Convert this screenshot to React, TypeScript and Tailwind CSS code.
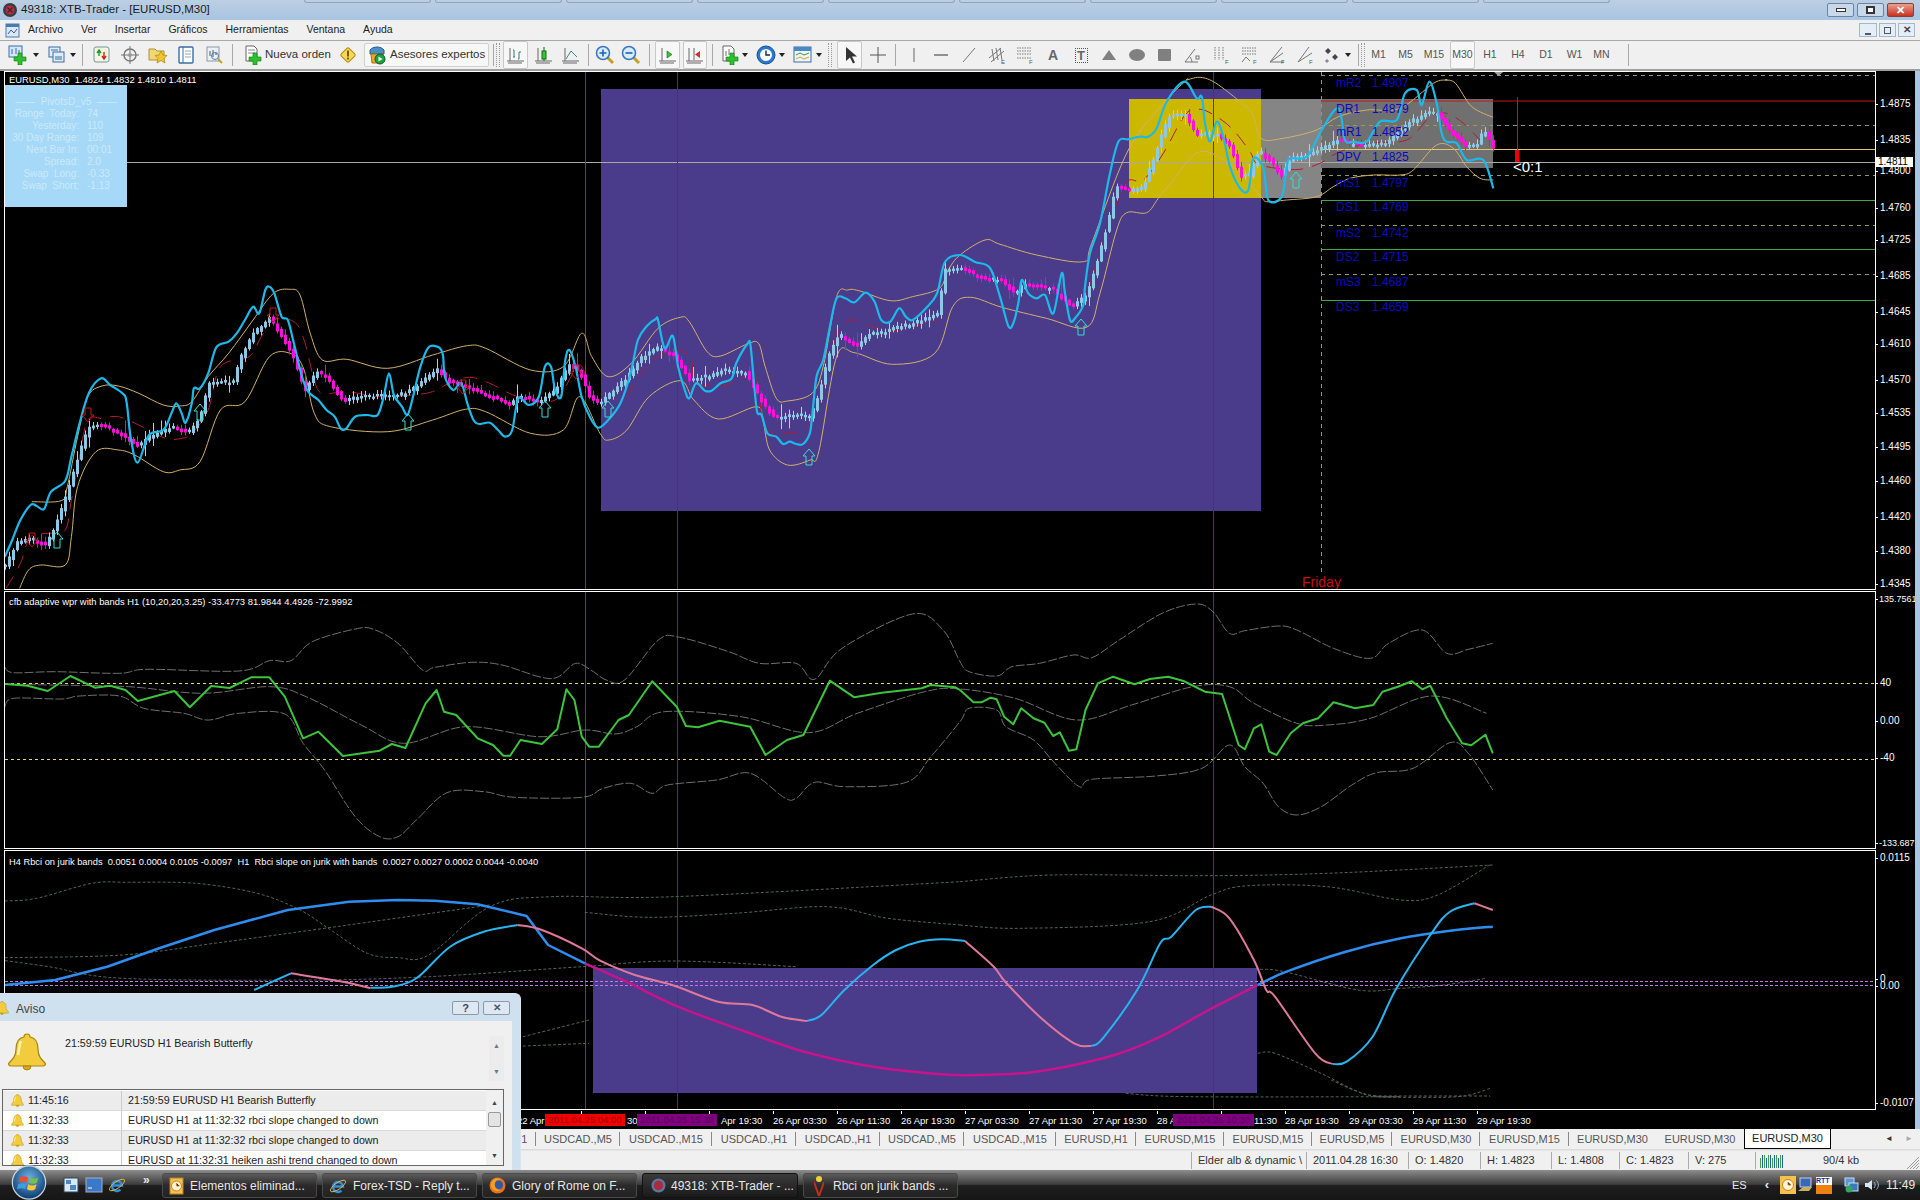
import React from "react";

type P = number[][];
const z7 = (p: P) => p.map(([x, y]) => [x / 2.45, 270 + y / 3]);
const z8 = (p: P) => p.map(([x, y]) => [600 + x / 2.24, 270 + y / 3]);
const z12 = (p: P) => p.map(([x, y]) => [1000 + x / 3, 80 + y / 3]);
const z3 = (p: P) => p.map(([x, y]) => [1280 + x / 2.45, y / 3]);
const z2 = (p: P) => p.map(([x, y]) => [640 + x / 2.45, y / 3]);
const z9 = (p: P) => p.map(([x, y]) => [x / 1.633, 590 + y / 3]);
const z10 = (p: P) => p.map(([x, y]) => [960 + x / 1.633, 590 + y / 3]);
const z11 = (p: P) => p.map(([x, y]) => [500 + x / 1.742, 940 + y / 3]);
const z6 = (p: P) => p.map(([x, y]) => [1280 + x / 2.45, 1080 + y / 3]);
const pts = (p: P) => p.map(([x, y]) => `${x.toFixed(1)},${y.toFixed(1)}`).join(" ");
const smooth = (p: P) => {
  let d = `M${p[0][0].toFixed(1)} ${p[0][1].toFixed(1)}`;
  for (let i = 0; i < p.length - 1; i++) {
    const a = p[Math.max(i - 1, 0)], b = p[i], c = p[i + 1], e = p[Math.min(i + 2, p.length - 1)];
    d += `C${(b[0] + (c[0] - a[0]) / 6).toFixed(1)} ${(b[1] + (c[1] - a[1]) / 6).toFixed(1)} ${(c[0] - (e[0] - b[0]) / 6).toFixed(1)} ${(c[1] - (e[1] - b[1]) / 6).toFixed(1)} ${c[0].toFixed(1)} ${c[1].toFixed(1)}`;
  }
  return d;
};

const cyan: P = [
  ...z7([[12,860],[30,810],[50,750],[75,705],[90,708],[108,717],[125,665],[160,632],[175,560],[195,460],[218,368],[248,325],[270,345],[300,370],[310,395],[320,500],[337,578],[365,495],[400,480],[420,430],[432,400],[445,430],[455,458],[470,400],[475,355],[490,355],[510,310],[530,232],[560,215],[580,190],[600,150],[620,110],[635,130],[650,60],[660,50],[672,70],[690,140],[705,150],[720,220],[740,320],[755,365],[780,390],[800,420],[820,440],[835,476],[848,476],[870,440],[900,435],[925,435],[940,380],[953,310],[965,375],[985,410],[998,435],[1010,390],[1030,290],[1050,232],[1075,232],[1085,255],[1090,320],[1110,360],[1130,340],[1145,400],[1160,450],[1175,462],[1200,458],[1220,480],[1238,500],[1255,480],[1270,385],[1295,405],[1320,380],[1335,290],[1350,290],[1360,360],[1375,380],[1385,270],[1395,240],[1410,290],[1425,380],[1445,440],[1465,473],[1490,450],[1520,400],[1545,310]]),
  ...z8([[85,210],[105,168],[125,147],[130,150],[145,235],[163,198],[175,290],[190,360],[200,385],[215,340],[235,362],[250,362],[270,340],[295,325],[305,280],[330,222],[337,225],[345,340],[352,425],[362,435],[375,490],[395,500],[410,522],[425,515],[440,522],[455,522],[470,490],[475,440],[485,320],[500,270],[515,170],[530,85],[550,85],[570,97],[595,68],[615,95],[630,150],[650,155],[670,115],[685,140],[700,150],[730,115],[755,70]]),
  [945,262],[960,255],[975,262],[990,268],
  ...z12([[0,650],[25,738],[40,730],[55,670],[65,600],[85,640],[110,655],[135,645],[160,700],[185,580],[195,640],[210,720],[225,715],[250,675],[255,620],[270,520],[300,430],[330,280],[355,185],[385,178],[420,170],[445,170],[470,145],[500,65],[553,5],[590,55],[605,50],[615,130],[630,185],[650,125],[670,170],[690,260],[720,325],[745,330],[760,235],[790,265],[805,360],[845,350],[860,260],[870,235],[920,230],[965,150],[1015,85],[1035,180],[1060,185],[1100,185],[1140,125],[1190,120],[1215,40],[1250,30],[1265,75],[1288,5],[1310,70],[1325,160],[1340,185],[1370,190],[1400,240],[1450,240],[1480,325]]),
];
const upper: P = [
  ...z7([[78,695],[150,692],[165,650],[190,500],[215,380],[250,348],[290,348],[340,370],[400,405],[440,408],[470,395],[510,320],[560,250],[620,150],[670,70],[710,58],[735,75],[760,190],[790,270],[850,268],[950,295],[1060,255],[1145,227],[1190,235],[1300,300],[1380,290],[1425,190],[1450,260],[1490,320]]),
  ...z8([[70,280],[130,175],[180,142],[200,155],[240,245],[270,258],[330,222],[355,220],[370,290],[395,385],[420,393],[475,370],[500,290],[530,80],[555,60],[580,62],[650,92],[700,80],[760,55],[780,0]]),
  [960,255],[985,240],
  ...z12([[0,493],[110,525],[250,545],[275,490],[385,210],[500,60],[560,0]]),
  ...z2([[1340,240],[1370,232],[1405,245],[1460,295],[1500,340]]),
  ...z12([[783,175],[850,175],[950,150],[1015,110],[1100,90],[1200,85],[1300,10],[1340,0]]),
  ...z3([[405,240],[430,250],[470,320],[522,352]]),
];
const lower: P = [
  ...z7([[48,955],[70,900],[100,885],[160,885],[175,800],[190,650],[235,545],[290,540],[330,555],[400,605],[440,600],[490,575],[540,420],[600,395],[660,260],[715,252],[745,300],[770,430],[810,470],[950,485],[1060,450],[1140,418],[1190,425],[1300,490],[1380,480],[1420,380],[1470,490]]),
  ...z8([[20,510],[60,480],[110,380],[180,332],[210,390],[265,447],[350,410],[365,450],[380,540],[420,585],[470,570],[490,545],[530,260],[570,248],[655,283],[750,250],[790,110],[830,82],[900,112],[1000,145],[1090,172]]),
  ...z12([[300,640],[350,450],[380,398],[440,398],[475,355],[520,300],[600,215],[700,260],[783,350],[800,365],[860,360],[950,350],[1000,320],[1050,295],[1120,285],[1200,285],[1240,270],[1310,195],[1360,205],[1400,260],[1440,295],[1480,300]]),
];
const redDash: P[] = [
  z7([[15,955],[50,880],[75,800],[120,790],[160,780],[175,690],[195,560],[215,450],[250,445],[290,440],[340,465],[405,505],[445,505],[470,490],[510,420],[540,290],[610,260],[640,200],[670,150],[720,155],[745,210],[770,330],[790,370],[850,365],[930,380],[1010,375],[1060,365],[1100,340],[1150,322],[1200,340],[1270,380],[1360,390],[1420,285],[1445,390]]),
  z8([[60,380],[110,280],[170,240],[205,270],[215,340],[300,340],[345,310],[370,470],[420,490],[470,460],[510,310],[530,195],[560,150],[600,165],[650,185],[700,170],[755,150]]),
  z12([[260,640],[340,400],[380,305],[430,300],[490,220],[555,105],[600,88],[650,110],[700,150],[750,215],[770,250],[830,265],[900,268],[960,250],[1010,220],[1100,190],[1220,180],[1290,110],[1340,100],[1390,130],[1440,180]]),
];
const candlePath: P = [
  ...z7([[12,890],[40,820],[75,805],[110,825],[130,780],[150,720],[175,620],[195,545],[215,470],[235,465],[265,475],[300,495],[340,530],[365,500],[420,470],[460,490],[490,440],[510,340],[540,335],[570,340],[590,260],[620,190],[660,145],[690,200],[720,270],[745,360],[775,310],[800,320],[840,395],[880,380],[930,378],[975,378],[1010,360],[1070,300],[1100,335],[1150,355],[1200,380],[1250,405],[1270,378],[1320,395],[1360,360],[1395,280],[1420,310],[1445,385],[1470,400],[1530,330]]),
  ...z8([[90,265],[130,235],[165,255],[200,330],[240,320],[275,300],[325,310],[365,400],[390,445],[430,435],[470,440],[490,370],[515,240],[535,195],[575,225],[600,195],[640,185],[690,165],[755,135]]),
  [945,270],[960,268],[975,275],[990,280],
  ...z12([[0,600],[45,645],[70,610],[130,625],[160,630],[215,680],[240,660],[260,640],[295,530],[330,400],[345,320],[385,335],[430,320],[465,220],[505,110],[555,105],[585,160],[625,165],[650,165],[690,200],[720,290],[745,290],[775,210],[815,250],[845,290],[870,240],[960,210],[1010,180],[1085,200],[1160,190],[1225,130],[1280,100],[1310,100],[1345,150],[1395,200],[1430,195],[1450,150],[1480,200]]),
];
const interp = (p: P, x: number) => {
  if (x <= p[0][0]) return p[0][1];
  for (let i = 1; i < p.length; i++) {
    if (x <= p[i][0] && p[i][0] > p[i - 1][0]) {
      const t = (x - p[i - 1][0]) / (p[i][0] - p[i - 1][0]);
      return p[i - 1][1] + t * (p[i][1] - p[i - 1][1]);
    }
  }
  return p[p.length - 1][1];
};
const rnd = (i: number) => {
  const v = Math.sin(i * 12.9898) * 43758.5453;
  return v - Math.floor(v);
};
const candles = Array.from({ length: 373 }, (_, i) => {
  const x = 5 + i * 4;
  const j = (rnd(i + 900) - 0.5) * 3;
  const a = interp(candlePath, x - 4) + j;
  const b = interp(candlePath, x) + j;
  const down = b - a > 0.8 + j * 0.2;
  const top = Math.min(a, b) - 1;
  const bot = Math.max(a, b) + 1;
  const longWick = rnd(i + 300) > 0.85;
  return { x, down, top, bot, hi: top - 1 - rnd(i) * (longWick ? 12 : 4), lo: bot + 0.5 + rnd(i + 500) * (longWick ? 11 : 3.5) };
});

const greenLine: P = [
  ...z9([[8,282],[45,287],[78,303],[115,258],[155,293],[180,287],[205,300],[225,333],[285,303],[310,352],[345,288],[375,294],[410,262],[440,262],[465,320],[495,445],[520,425],[560,498],[620,482],[640,462],[662,474],[695,340],[713,300],[725,365],[745,375],[780,445],[805,465],[822,497],[833,497],[850,450],[885,462],[910,418],[925,298],[938,330],[950,440],[962,470],[978,470],[1010,390],[1027,375],[1065,274],[1105,350],[1120,408],[1140,412],[1175,392],[1225,410],[1250,495],[1285,450],[1312,435],[1355,272],[1395,322],[1440,308],[1505,295],[1520,285],[1560,292]]),
  ...z10([[0,300],[22,337],[35,337],[50,323],[60,328],[72,380],[87,403],[100,355],[120,385],[138,398],[152,438],[163,427],[178,482],[190,478],[205,360],[225,280],[250,260],[285,283],[310,267],[340,260],[365,273],[400,305],[428,312],[455,465],[465,478],[480,415],[492,403],[505,485],[517,495],[540,430],[560,400],[585,385],[610,337],[645,355],[675,345],[690,305],[715,290],[738,274],[755,298],[768,287],[795,385],[820,460],[835,466],[858,434],[870,490]]),
];
const wprBands: P[] = [
  [...z9([[8,232],[22,248],[90,245],[195,250],[240,238],[390,243],[440,212],[475,212],[510,155],[580,117],[610,118],[650,160],[690,240],[710,232],[770,217],[820,225],[880,260],[910,262],[940,220],[965,240],[990,270],[1020,270],[1075,150],[1110,142],[1190,185],[1240,220],[1300,220],[1330,268],[1375,175],[1490,72],[1540,120]]),
   ...z10([[0,215],[15,245],[60,258],[85,230],[130,220],[185,195],[215,203],[260,150],[330,70],[385,42],[413,65],[440,130],[465,122],[520,108],[550,120],[610,175],[670,205],[700,160],[755,120],[795,190],[830,178],[870,160]])],
  [...z9([[8,282],[80,285],[210,290],[330,310],[440,290],[500,320],[590,405],[660,460],[760,410],[880,440],[955,420],[1005,432],[1040,410],[1085,365],[1210,380],[1320,428],[1400,370],[1510,305]]),
   ...z10([[0,297],[90,325],[190,390],[280,345],[380,290],[440,290],[480,340],[550,400],[600,405],[670,385],[770,318],[860,370]])],
  [...z9([[8,350],[22,325],[100,327],[130,318],[195,318],[235,355],[300,370],[330,388],[350,388],[390,370],[465,372],[495,460],[530,540],[580,680],[620,740],[650,740],[680,690],[730,608],[790,605],[840,622],[950,622],[985,595],[1030,580],[1065,610],[1090,585],[1170,570],[1225,550],[1280,622],[1300,625],[1330,577],[1380,590],[1480,577],[1520,500]]),
   ...z10([[0,395],[15,355],[60,360],[75,410],[120,450],[155,520],[195,590],[215,568],[320,558],[395,535],[440,465],[465,530],[495,580],[520,650],[550,675],[590,650],[640,585],[680,548],[740,535],[800,458],[830,490],[870,600]])],
];
const rbBlue1: P = [...z9([[8,1185],[90,1170],[175,1130],[260,1075],[350,1020],[470,960],[570,935],[650,930],[710,932],[780,943],[860,978]]), ...z9([[895,1065]]), ...z11([[148,70]])];
const rbMag: P = z11([[148,70],[220,125],[310,200],[420,270],[530,335],[650,380],[770,403],[830,405],[920,398],[1000,375],[1080,340],[1150,290],[1240,205],[1320,135]]);
const rbBlue2: P = [...z11([[1320,135],[1370,95]]), ...z10([[630,1085],[720,1045],[810,1020],[870,1010]])];
const thinCyan: P[] = [
  z9([[415,1200],[475,1150]]),
  z9([[605,1193],[640,1190],[680,1165],[735,1070],[790,1025],[845,1005]]),
  z11([[535,243],[560,225],[600,150],[650,75],[690,30],[730,5],[770,-2],[810,3]]),
  [...z11([[1030,318],[1050,295],[1110,150],[1150,10]]), ...z10([[345,1040],[385,960],[410,950]])],
  [...z11([[1450,372],[1475,365],[1520,290],[1560,150]]), ...z10([[770,1030],[800,965],[840,940]])],
];
const thinPink: P[] = [
  z9([[475,1150],[560,1175],[605,1195]]),
  [...z9([[845,1005],[885,1020],[950,1075],[980,1112]]), ...z11([[235,105],[300,135],[380,185],[440,195],[490,230],[535,243]])],
  z11([[810,3],[860,80],[880,125],[940,230],[1000,310],[1030,318]]),
  [...z10([[410,950],[440,985],[480,1110],[500,1200]]), ...z11([[1350,170],[1420,340],[1450,372]])],
  z10([[840,940],[870,960]]),
];
const rbDots: P[] = [
  z9([[8,933],[60,925],[150,880],[210,877],[320,880],[420,910],[490,960],[540,1020],[600,1090],[650,1103],[700,1095],[800,950],[900,920],[1100,920],[1568,875]]),
  z9([[8,1103],[200,1095],[350,1060],[530,1015],[800,945]]),
  z9([[955,967],[1060,982],[1200,970],[1350,950],[1450,985],[1568,1005]]),
  z9([[0,1110],[80,1130],[200,1165],[500,1170],[700,1160],[950,1130],[1100,1113],[1300,1130]]),
  z10([[0,875],[150,855],[400,857],[600,850],[870,825]]),
  z10([[0,1005],[100,1015],[310,995],[410,915],[470,887],[600,890],[720,930],[780,915],[865,825]]),
  z10([[490,1138],[530,1145],[650,1200],[720,1195],[790,1185],[860,1165]]),
  z11([[40,290],[155,240]]),
  z11([[40,318],[155,310]]),
  z11([[1320,340],[1350,340],[1430,400],[1510,465],[1568,470]]),
  z11([[1090,460],[1200,470],[1568,470]]),
  z6([[125,0],[220,45],[350,52],[450,48],[515,25]]),
  z6([[230,48],[515,48]]),
];

const upArrows = [[57,540],[200,412],[408,422],[545,409],[608,409],[809,457],[1081,327],[1296,180]];
const downArrows = [[32,540],[88,415],[273,315],[463,387],[576,372]];

const priceLabels: [string, number][] = [["1.4875",104],["1.4835",140],["1.4800",171],["1.4760",208],["1.4725",240],["1.4685",276],["1.4645",312],["1.4610",344],["1.4570",380],["1.4535",413],["1.4495",447],["1.4460",481],["1.4420",517],["1.4380",551],["1.4345",584]];
const pivots: [string, string, number][] = [["mR2","1.4907",83],["DR1","1.4879",109],["mR1","1.4852",132],["DPV","1.4825",157],["mS1","1.4797",183],["DS1","1.4769",207],["mS2","1.4742",233],["DS2","1.4715",257],["mS3","1.4687",282],["DS3","1.4659",307]];
const pivotRows: [string, string][] = [["Range  Today:","74"],["Yesterday:","110"],["30 Day Range:","109"],["Next Bar In:","00:01"],["Spread:","2.0"],["Swap  Long:","-0.33"],["Swap  Short:","-1.13"]];
const timeLabels: [string, string][] = [["22 Apr",""],["30","pl-[46px]"],["",""],["Apr 19:30","pl-[12px]"],["26 Apr 03:30",""],["26 Apr 11:30",""],["26 Apr 19:30",""],["27 Apr 03:30",""],["27 Apr 11:30",""],["27 Apr 19:30",""],["28 A",""],["11:30","pl-[33px]"],["28 Apr 19:30",""],["29 Apr 03:30",""],["29 Apr 11:30",""],["29 Apr 19:30",""]];
const tabs: [string, string][] = [["USDCAD.,H1","w-[84px]"],["USDCAD.,M5","w-[84px]"],["USDCAD.,M15","w-[92px]"],["USDCAD.,H1","w-[84px]"],["USDCAD.,H1","w-[84px]"],["USDCAD.,M5","w-[84px]"],["USDCAD.,M15","w-[92px]"],["EURUSD,H1","w-[80px]"],["EURUSD,M15","w-[88px]"],["EURUSD,M15","w-[88px]"],["EURUSD,M5","w-[80px]"],["EURUSD,M30","w-[88px]"],["EURUSD,M15","w-[89px]"],["EURUSD,M30","w-[87px]"],["EURUSD,M30","w-[88px]"]];
const statusCells: [string, string][] = [["Elder alb & dynamic \\","w-[115px]"],["2011.04.28 16:30","w-[102px]"],["O: 1.4820","w-[72px]"],["H: 1.4823","w-[71px]"],["L: 1.4808","w-[68px]"],["C: 1.4823","w-[69px]"],["V: 275","w-[67px]"]];
const alerts: [string, string, string][] = [
  ["11:45:16","21:59:59 EURUSD H1 Bearish Butterfly","bg-[#ececec]"],
  ["11:32:33","EURUSD H1 at 11:32:32 rbci slope changed to down","bg-white"],
  ["11:32:33","EURUSD H1 at 11:32:32 rbci slope changed to down","bg-[#ececec]"],
  ["11:32:33","EURUSD at 11:32:31 heiken ashi trend changed to down","bg-white"],
];

const B = ({ c, children }: { c: string; children?: React.ReactNode }) => (
  <div className={"flex items-center justify-center h-full shrink-0 " + c}>{children}</div>
);
const S = ({ w = 20, h = 20, children }: { w?: number; h?: number; children?: React.ReactNode }) => (
  <svg width={w} height={h} viewBox={`0 0 ${w} ${h}`} fill="none">{children}</svg>
);
const Plus = () => <path d="M10 8h4v4h4v4h-4v4h-4v-4H6v-4h4z" fill="#2ec02e" stroke="#0c7a0c" strokeWidth=".6" />;
const Arrow = () => <svg width="6" height="4" viewBox="0 0 6 4"><path d="M0 0h6L3 4z" fill="#222" /></svg>;
const Sep = () => <div className="w-px h-[22px] bg-[#a8a8a8]" />;
const Grip = () => <div className="w-[4px] h-[24px] border-x border-dotted border-[#999]" />;
const Pressed = "bg-[#f7f7f7] border border-[#c8c8c8] rounded-[2px] h-[24px] ";
const Axes = ({ children }: { children?: React.ReactNode }) => (
  <S><path d="M4 3v13M1 16h17M2 18h14" stroke="#666" />{children}</S>
);
const Lens = ({ plus }: { plus?: boolean }) => (
  <S><path d="M12 12l6 6" stroke="#c8a020" strokeWidth="3" /><circle cx="8" cy="8" r="6.5" fill="#d8ecff" stroke="#3b78c0" strokeWidth="1.6" /><path d={plus ? "M4.5 8h7M8 4.5v7" : "M4.5 8h7"} stroke="#2060b0" strokeWidth="1.6" /></S>
);
const Doc = () => <path d="M3 1h8l3 3v12H3z" fill="#fff" stroke="#666" />;
const Bell = ({ s = 14 }: { s?: number }) => (
  <svg width={s} height={s} viewBox="0 0 38 38">
    <path d="M19 1c2 0 3 1 3 3c6 1 8 6 8 12c0 7 3 10 7 14c1 1 0 3-2 3H3c-2 0-3-2-2-3c4-4 7-7 7-14c0-6 2-11 8-12c0-2 1-3 3-3z" fill="#f2cc3c" stroke="#a88410" strokeWidth="1.2" />
    <path d="M13 8c-2 4-2 10-3 14" stroke="#fff3b0" strokeWidth="2.5" fill="none" />
    <path d="M15 33a4 4 0 0 0 8 0z" fill="#d8a820" stroke="#a88410" />
  </svg>
);
const Ie = ({ s = 18 }: { s?: number }) => (
  <svg width={s} height={s} viewBox="0 0 18 18" fill="none">
    <path d="M4 9.5h10a5 5 0 1 0-1.6 4.2" stroke="#2f8fe0" strokeWidth="2.4" />
    <ellipse cx="9" cy="9" rx="9" ry="3.2" transform="rotate(-35 9 9)" stroke="#e8b83a" strokeWidth=".9" />
  </svg>
);
const TaskBtn = ({ c, icon, text }: { c: string; icon: React.ReactNode; text: string }) => (
  <div className={"h-[25px] shrink-0 flex items-center rounded-[3px] border border-[#4a4a4a] text-[12px] text-[#e8e8e8] whitespace-nowrap " + c}>
    {icon}
    <span>{text}</span>
  </div>
);

function PriceTag({ y, text, top }: { y: number; text: string; top: number }) {
  const long = text.length > 7;
  return (
    <div className="absolute left-0 flex items-center -translate-y-1/2 h-[10px] whitespace-nowrap" style={{ top: y - top }}>
      <div className="w-[2px] h-px bg-white" />
      <span className={long ? "ml-px text-[9px] leading-[10px] text-white" : "ml-[2px] text-[10px] leading-[10px] text-white"}>{text}</span>
    </div>
  );
}

function Vlines({ top, bottom }: { top: number; bottom: number }) {
  return (
    <>
      <line x1="585.5" x2="585.5" y1={top} y2={bottom} stroke="#b82020" />
      <line x1="677.5" x2="677.5" y1={top} y2={bottom} stroke="#8a1080" />
      <line x1="1213.5" x2="1213.5" y1={top} y2={bottom} stroke="#8a1080" />
    </>
  );
}

function MainChart() {
  const hline = (y: number, c: string, dash?: string) => <line x1="1321" x2="1875" y1={y} y2={y} stroke={c} strokeDasharray={dash} />;
  return (
    <svg className="absolute inset-0" width="1870" height="517" viewBox="5 72 1870 517">
      <rect x="601" y="89" width="660" height="422" fill="#4a3c8a" />
      <rect x="1129" y="99" width="132" height="99" fill="#cdb800" />
      <rect x="1261" y="99" width="60" height="99" fill="#858585" />
      <rect x="1321" y="99" width="172" height="69" fill="#707070" />
      <line x1="5" x2="1875" y1="162.5" y2="162.5" stroke="#a8a8a8" />
      <line x1="1321.5" x2="1321.5" y1="72" y2="576" stroke="#9a9a50" strokeDasharray="4 4" />
      {hline(75.5, "#9a9a50", "4 4")}
      {hline(101, "#c01818")}
      {hline(125.5, "#9a9a50", "4 4")}
      {hline(149.5, "#e8c468")}
      {hline(175.5, "#9a9a50", "4 4")}
      {hline(200.5, "#40a840")}
      {hline(225.5, "#9a9a50", "4 4")}
      {hline(249.5, "#40a840")}
      {hline(274.5, "#9a9a50", "4 4")}
      {hline(300.5, "#40a840")}
      <Vlines top={72} bottom={589} />
      <path d={smooth(upper)} fill="none" stroke="#d2b06a" strokeWidth="1" />
      <path d={smooth(lower)} fill="none" stroke="#d2b06a" strokeWidth="1" />
      {redDash.map((r, i) => <path key={i} d={smooth(r)} fill="none" stroke="#b01c34" strokeWidth="1" strokeDasharray="14 9" />)}
      {candles.map((c, i) => (
        <g key={i}>
          <line x1={c.x + 0.5} x2={c.x + 0.5} y1={c.hi} y2={c.lo} stroke={c.down ? "#d014c0" : "#a8d4e8"} />
          <rect x={c.x - 1} y={c.top} width="3" height={c.bot - c.top} fill={c.down ? "#ff10dc" : "#8fc8e4"} />
        </g>
      ))}
      <path d={smooth(cyan)} fill="none" stroke="#1db9ea" strokeWidth="2.2" strokeLinejoin="round" />
      {upArrows.map(([x, y], i) => (
        <polygon key={i} points={`${x},${y - 8} ${x + 6},${y - 1} ${x + 3},${y - 1} ${x + 3},${y + 8} ${x - 3},${y + 8} ${x - 3},${y - 1} ${x - 6},${y - 1}`} fill="none" stroke="#30e0d0" />
      ))}
      {downArrows.map(([x, y], i) => (
        <polygon key={i} points={`${x},${y + 7} ${x + 6},${y} ${x + 3},${y} ${x + 3},${y - 7} ${x - 3},${y - 7} ${x - 3},${y} ${x - 6},${y}`} fill="none" stroke="#c01818" />
      ))}
      <path d="M1494 72h9l-4.500 4z" fill="#a0a0a0" />
      <line x1="1517.500" x2="1517.500" y1="97" y2="150" stroke="#c01818" />
      <rect x="1515" y="150" width="4.500" height="12" fill="#f00000" />
    </svg>
  );
}

function WprChart() {
  return (
    <svg className="absolute inset-0" width="1870" height="256" viewBox="5 592 1870 256">
      <line x1="5" x2="1875" y1="683.5" y2="683.5" stroke="#e8d860" strokeDasharray="3 3" />
      <line x1="5" x2="1875" y1="759.5" y2="759.5" stroke="#e8d860" strokeDasharray="3 3" />
      <Vlines top={592} bottom={848} />
      {wprBands.map((b, i) => <path key={i} d={smooth(b)} fill="none" stroke="#7c7c7c" strokeWidth=".9" strokeDasharray="9 2" />)}
      <polyline points={pts(greenLine)} fill="none" stroke="#3cc43c" strokeWidth="2" strokeLinejoin="round" />
    </svg>
  );
}

function RbciChart() {
  return (
    <svg className="absolute inset-0" width="1870" height="258" viewBox="5 851 1870 258">
      <rect x="593" y="968" width="664" height="125" fill="#4a3c8a" />
      <Vlines top={851} bottom={1109} />
      {rbDots.map((b, i) => <path key={i} d={smooth(b)} fill="none" stroke="#586458" strokeWidth="1" strokeDasharray="3 2" />)}
      <line x1="5" x2="1875" y1="981.5" y2="981.5" stroke="#c078e8" strokeDasharray="3 2" />
      <line x1="5" x2="1875" y1="985.5" y2="985.5" stroke="#c078e8" strokeDasharray="3 2" />
      <path d={smooth(rbMag)} fill="none" stroke="#c8148c" strokeWidth="2.5" />
      <polyline points={pts(rbBlue1)} fill="none" stroke="#2e8ef0" strokeWidth="2.5" strokeLinejoin="round" />
      <path d={smooth(rbBlue2)} fill="none" stroke="#2e8ef0" strokeWidth="2.5" />
      {thinCyan.map((b, i) => <path key={i} d={smooth(b)} fill="none" stroke="#28b4f0" strokeWidth="2" />)}
      {thinPink.map((b, i) => <path key={i} d={smooth(b)} fill="none" stroke="#e0789c" strokeWidth="2" />)}
    </svg>
  );
}

function Toolbar() {
  return (
    <div className="h-[28px] shrink-0 flex items-center pl-[7px] bg-[#f0f0f0] text-[#333] overflow-hidden">
      <B c="w-[22px]"><S><rect x="1" y="1" width="13" height="11" fill="#d4e6f8" stroke="#3a6ea5" /><path d="M4 9V4M8 9V3M11 8V5" stroke="#3a6ea5" /><Plus /></S></B>
      <B c="w-[13px]"><Arrow /></B>
      <B c="w-[24px] ml-[3px]"><S><rect x="2" y="2" width="11" height="10" fill="#e0ecf8" stroke="#3a6ea5" /><rect x="6" y="7" width="11" height="10" fill="#e0ecf8" stroke="#3a6ea5" /><path d="M4 5h7M8 12h7M8 14h7" stroke="#3a6ea5" /></S></B>
      <B c="w-[7px]"><Arrow /></B>
      <B c="w-[12px]"><Sep /></B>
      <B c="w-[28px]"><S><rect x="2" y="2" width="15" height="15" rx="2" fill="#f8f4e0" stroke="#6a98a0" /><path d="M7 11V6M5 8l2-3 2 3" stroke="#1a9a30" strokeWidth="1.4" /><path d="M12 7v6M10 11l2 3 2-3" stroke="#d02020" strokeWidth="1.4" /></S></B>
      <B c="w-[28px]"><S><circle cx="10" cy="10" r="6" stroke="#777" strokeWidth="1.4" fill="#f0f0f0" /><path d="M10 1v18M1 10h18" stroke="#777" /><circle cx="10" cy="10" r="2" fill="#999" /></S></B>
      <B c="w-[28px]"><S><path d="M1 4h6l2 2h7v9H1z" fill="#f0d878" stroke="#b09030" /><path d="M13 6l2 4 4 .5-3 3 1 4.500-4-2.500-4 2.500 1-4.500-3-3 4-.5z" fill="#f4c430" stroke="#a88010" strokeWidth=".7" /></S></B>
      <B c="w-[28px]"><S><rect x="3" y="2" width="14" height="16" rx="1" fill="#fff" stroke="#3a6ea5" strokeWidth="1.4" /><path d="M7 2v16" stroke="#3a6ea5" /><path d="M9 6h6M9 9h6M9 12h6" stroke="#8aa" /></S></B>
      <B c="w-[28px]"><S><rect x="3" y="2" width="12" height="14" fill="#e8f0f8" stroke="#8a9aa8" /><path d="M6 11V6M9 12V5M12 10V7" stroke="#556" /><circle cx="11" cy="11" r="3.500" stroke="#5a80a8" /><path d="M14 14l4 4" stroke="#c8a020" strokeWidth="2" /></S></B>
      <B c="w-[9px]"><Sep /></B>
      <div className="ml-[3px] w-[95px] h-full shrink-0 flex items-center pl-[3px]">
        <S><Doc /><path d="M5 5h7M5 8h7" stroke="#889" /><Plus /></S>
        <span className="text-[11.5px] ml-[2px] whitespace-nowrap">Nueva orden</span>
      </div>
      <B c="w-[25px]"><S><rect x="4.500" y="4.500" width="11" height="11" rx="1.500" transform="rotate(45 10 10)" fill="#f8d850" stroke="#a88a18" /><rect x="9" y="5.500" width="2" height="6" fill="#7a5a10" /><rect x="9" y="12.500" width="2" height="2" fill="#7a5a10" /></S></B>
      <div className="ml-[4px] w-[125px] h-[24px] shrink-0 flex items-center pl-[2px] bg-[#f7f7f7] border border-[#d0d0d0] rounded-[2px]">
        <S><path d="M3 5c3-4 11-4 14 0v4H3z" fill="#4a90c8" stroke="#2a5a88" /><path d="M4 9h12l-1 9H5z" fill="#e8a830" stroke="#a87010" /><circle cx="13" cy="14" r="5" fill="#20a040" stroke="#0a6020" /><path d="M11.500 11.500v5l4-2.500z" fill="#fff" /></S>
        <span className="text-[11.5px] ml-[3px] whitespace-nowrap">Asesores expertos</span>
      </div>
      <B c="w-[14px] gap-[2px]"><Sep /><Grip /></B>
      <B c={"w-[25px] " + Pressed}><Axes><path d="M8 12V5M7 12h2M7 5h1M13 14V7M12 14h1M13 7h2" stroke="#2c7a7a" /></Axes></B>
      <B c="w-[28px] ml-[2px]"><Axes><rect x="8" y="6" width="4" height="8" fill="#3cc43c" stroke="#0c6a0c" /><path d="M10 2v4M10 14v2" stroke="#0c6a0c" /></Axes></B>
      <B c="w-[26px]"><Axes><path d="M5 14l5-8 6 6" stroke="#3a8a8a" /></Axes></B>
      <B c="w-[8px]"><Sep /></B>
      <B c="w-[26px]"><Lens plus /></B>
      <B c="w-[25px]"><Lens /></B>
      <B c="w-[12px]"><Sep /></B>
      <B c={"w-[25px] " + Pressed}><Axes><path d="M9 6v7l5-3.500z" fill="#3cc43c" stroke="#0c6a0c" strokeWidth=".6" /></Axes></B>
      <B c={"w-[24px] ml-[3px] " + Pressed}><Axes><path d="M9 3v12" stroke="#666" /><path d="M15 6v7l-5-3.500z" fill="#d03030" /></Axes></B>
      <B c="w-[10px]"><Sep /></B>
      <B c="w-[20px] ml-[3px]"><S><Doc /><path d="M6 11V6M9 10V4" stroke="#776" /><Plus /></S></B>
      <B c="w-[10px]"><Arrow /></B>
      <B c="w-[24px] ml-[4px]"><S><circle cx="10" cy="10" r="9" fill="#2a78d0" stroke="#14508f" /><circle cx="10" cy="10" r="6" fill="#f4f8ff" /><path d="M10 5.500V10h4" stroke="#223" strokeWidth="1.400" /></S></B>
      <B c="w-[8px]"><Arrow /></B>
      <B c="w-[26px] ml-[4px]"><S><rect x="1" y="2" width="17" height="15" fill="#eef4fa" stroke="#3a6ea5" /><rect x="1" y="2" width="17" height="4" fill="#4a88c8" /><path d="M3 10l4-2 4 2 5-2" stroke="#30a040" /><path d="M3 14l4-2 4 2 5-2" stroke="#d8a020" /></S></B>
      <B c="w-[6px]"><Arrow /></B>
      <B c="w-[15px]"><Grip /></B>
      <B c={"w-[25px] " + Pressed}><S><path d="M6 2v14l4-3.500 3 6 2-1-3-6h5z" fill="#333" /></S></B>
      <B c="w-[27px] ml-[2px]"><S><path d="M10 2v16M2 10h16" stroke="#555" /></S></B>
      <B c="w-[8px]"><Sep /></B>
      <B c="w-[27px] ml-[1px]"><S><path d="M10 3v14" stroke="#666" /></S></B>
      <B c="w-[28px]"><S><path d="M3 10h14" stroke="#666" strokeWidth="1.400" /></S></B>
      <B c="w-[28px]"><S><path d="M4 17L16 3" stroke="#777" /></S></B>
      <B c="w-[28px]"><S><path d="M2 13L14 3M4 17L17 6M5 4l2 12M9 3l2 12M13 3l2 12" stroke="#777" /><text x="14" y="19" fontSize="6" fill="#555">E</text></S></B>
      <B c="w-[28px]"><S><path d="M2 3h14M2 6h14M2 9h14M2 13h14" stroke="#777" strokeDasharray="1.500 1" /><text x="14" y="19" fontSize="6" fill="#555">F</text></S></B>
      <B c="w-[28px]"><span className="text-[14px] font-bold text-[#666]">A</span></B>
      <B c="w-[28px]"><div className="w-[13px] h-[15px] border border-dotted border-[#555] flex items-center justify-center text-[13px] font-bold leading-none text-[#666]">T</div></B>
      <B c="w-[28px]"><S><path d="M3 15L10 5l7 10z" fill="#808080" /></S></B>
      <B c="w-[28px]"><S><ellipse cx="10" cy="10" rx="8" ry="6" fill="#808080" /></S></B>
      <B c="w-[28px]"><S><rect x="3" y="4" width="13" height="12" rx="1" fill="#808080" /></S></B>
      <B c="w-[28px]"><S><path d="M2 17L12 4M2 17h13" stroke="#777" /><path d="M9 17a8 8 0 0 0-2-5" stroke="#777" /><rect x="13" y="11" width="3" height="3" stroke="#777" /></S></B>
      <B c="w-[28px]"><S><path d="M4 2v13M8 2v13M12 2v13" stroke="#777" strokeDasharray="1.500 1" /><text x="14" y="19" fontSize="6" fill="#555">F</text></S></B>
      <B c="w-[28px]"><S><path d="M3 3h14M3 6h14M3 9h14" stroke="#777" strokeDasharray="1.500 1" /><path d="M3 17l4-5 4 4" stroke="#777" /><text x="14" y="19" fontSize="6" fill="#555">F</text></S></B>
      <B c="w-[28px]"><S><path d="M3 17L15 2M3 17l13-9M3 17h14" stroke="#777" /><text x="14" y="19" fontSize="6" fill="#555">F</text></S></B>
      <B c="w-[28px]"><S><path d="M3 17L14 2M3 17L17 8" stroke="#777" /><text x="14" y="19" fontSize="6" fill="#555">F</text></S></B>
      <B c="w-[26px]"><S><path d="M6 3l3 3-3 3-3-3zM13 9l3 3-3 3-3-3z" fill="#445" /><path d="M5 14l2 2-2 2-2-2z" fill="#889" /></S></B>
      <B c="w-[6px]"><Arrow /></B>
      <B c="w-[8px] justify-end"><Sep /></B>
      <div className="ml-[2px]"><Grip /></div>
      {[["M1","w-[27px] ml-[0px]"],["M5","w-[27px]"],["M15","w-[30px]"]].map(([t, c]) => <B key={t} c={c}><span className="text-[10.5px] text-[#555]">{t}</span></B>)}
      <B c={"w-[25px] ml-[1px] " + Pressed}><span className="text-[10.5px] text-[#555]">M30</span></B>
      {[["H1","w-[28px] ml-[1px]"],["H4","w-[28px]"],["D1","w-[28px]"],["W1","w-[29px]"],["MN","w-[25px]"]].map(([t, c]) => <B key={t} c={c}><span className="text-[10.5px] text-[#555]">{t}</span></B>)}
      <B c="w-[29px] justify-center"><Sep /></B>
    </div>
  );
}

export default function App() {
  return (
    <div className="relative w-[1920px] h-[1200px] overflow-hidden flex flex-col bg-black text-[#222] [font-family:'Liberation_Sans',Arial,sans-serif]">
      {/* Title bar */}
      <div className="relative h-[20px] shrink-0 flex items-center bg-[linear-gradient(#bccfe2,#a8c5e2)]">
        <svg className="ml-[2px]" width="16" height="16" viewBox="0 0 16 16"><circle cx="8" cy="8" r="7" fill="#3a3a44" /><circle cx="8" cy="8" r="4.500" fill="#c02c3c" /><path d="M5.500 5.500l5 5M10.500 5.500l-5 5" stroke="#3a2a30" strokeWidth="1.400" /></svg>
        <span className="ml-[3px] text-[11.5px] text-[#1a1a1a] whitespace-nowrap">49318: XTB-Trader - [EURUSD,M30]</span>
        <div className="absolute left-[304px] top-0 flex gap-[4px]">
          {[0,1,2,3,4,5,6,7,8,9].map((i) => <div key={i} className="w-[127px] h-[3px] border-x border-b border-[#8ea6bc] rounded-b-[5px]" />)}
        </div>
        <div className="ml-auto mr-[6px] flex gap-[3px] h-[14px]">
          <div className="w-[27px] border border-[#6a86a4] rounded-[2px] bg-[#c8d8e8] flex items-center justify-center"><div className="w-[10px] h-[4px] border border-[#333] bg-white" /></div>
          <div className="w-[27px] border border-[#6a86a4] rounded-[2px] bg-[#c8d8e8] flex items-center justify-center"><div className="w-[9px] h-[8px] border-2 border-[#333] bg-white" /></div>
          <div className="w-[27px] border border-[#8a4030] rounded-[2px] bg-[linear-gradient(#e8a090,#c83020)] flex items-center justify-center text-white text-[11px] font-bold leading-none">✕</div>
        </div>
      </div>
      {/* Menu */}
      <div className="h-[21px] shrink-0 flex items-center bg-[#f0f0f0] border-b border-[#a8a8a8]">
        <svg className="ml-[5px]" width="15" height="15" viewBox="0 0 15 15"><rect x="1" y="1" width="13" height="13" fill="#d8e8f8" stroke="#4a7ab0" /><rect x="1" y="1" width="13" height="3" fill="#4a7ab0" /><path d="M3 11l3-4 3 3 3-4" stroke="#3060a0" fill="none" /></svg>
        <div className="ml-[8px] flex gap-[18px] text-[10.5px] text-[#222]">
          {["Archivo","Ver","Insertar","Gráficos","Herramientas","Ventana","Ayuda"].map((m) => <span key={m}>{m}</span>)}
        </div>
        <div className="ml-auto mr-[5px] flex gap-[2px] h-[14px]">
          <div className="w-[18px] border border-[#a0b8d0] bg-[#e4eef8] flex items-end justify-center pb-[1px]"><div className="w-[6px] h-[2px] bg-[#556]" /></div>
          <div className="w-[17px] border border-[#a0b8d0] bg-[#e4eef8] flex items-center justify-center"><div className="w-[7px] h-[7px] border border-[#556]" /></div>
          <div className="w-[17px] border border-[#a0b8d0] bg-[#e4eef8] flex items-center justify-center text-[#445] text-[10px] font-bold leading-none">✕</div>
        </div>
      </div>
      <Toolbar />
      <div className="h-[2px] shrink-0 bg-[#a0a0a0]" />

      {/* Chart area */}
      <div className="flex-1 flex min-h-0 bg-black">
        <div className="w-[1915px] flex flex-col gap-px shrink-0">
          {/* Main pane */}
          <div className="h-[519px] flex shrink-0">
            <div className="relative ml-[4px] w-[1872px] border border-white bg-black overflow-hidden">
              <MainChart />
              <div className="absolute left-[4px] top-[2px] text-[9.4px] leading-[12px] text-white whitespace-pre">EURUSD,M30  1.4824 1.4832 1.4810 1.4811</div>
              <div className="absolute left-0 top-[13px] w-[122px] h-[122px] bg-[#a6d8f7] pt-[11px] text-[10px] leading-[12px] text-[#cbeafc] whitespace-pre">
                <div className="text-center">——  PivotsD_v5  ——</div>
                {pivotRows.map(([l, v]) => (
                  <div key={l} className="flex">
                    <span className="w-[74px] text-right">{l}</span>
                    <span className="ml-[8px]">{v}</span>
                  </div>
                ))}
              </div>
              {pivots.map(([a, b, y]) => (
                <div key={a} className="absolute left-[1331px] flex -translate-y-1/2 text-[12px] leading-[14px] text-[#0a0ac4]" style={{ top: y - 72 }}>
                  <span className="w-[36px]">{a}</span>
                  <span>{b}</span>
                </div>
              ))}
              <div className="absolute left-[1297px] top-[503px] text-[14px] leading-[14px] text-[#c81010]">Friday</div>
              <div className="absolute left-[1508px] top-[87px] text-[15px] leading-[16px] text-white">&lt;0:1</div>
            </div>
            <div className="relative flex-1 overflow-hidden">
              {priceLabels.map(([t, y]) => <PriceTag key={t} y={y} text={t} top={71} />)}
              <div className="absolute left-0 top-[86px] w-[37px] h-[10px] bg-white text-black text-[10px] leading-[10px] pl-[2px]">1.4811</div>
            </div>
          </div>
          {/* WPR pane */}
          <div className="h-[258px] flex shrink-0">
            <div className="relative ml-[4px] w-[1872px] border border-white bg-black overflow-hidden">
              <WprChart />
              <div className="absolute left-[4px] top-[4px] text-[9.4px] leading-[12px] text-white whitespace-pre">cfb adaptive wpr with bands H1 (10,20,20,3.25) -33.4773 81.9844 4.4926 -72.9992</div>
            </div>
            <div className="relative flex-1 overflow-hidden">
              {([["135.7561",599],["40",683],["0.00",721],["-40",758],["-133.687",843]] as [string, number][]).map(([t, y]) => <PriceTag key={t} y={y} text={t} top={591} />)}
            </div>
          </div>
          {/* RBCI pane */}
          <div className="h-[260px] flex shrink-0">
            <div className="relative ml-[4px] w-[1872px] border border-white bg-black overflow-hidden">
              <RbciChart />
              <div className="absolute left-[4px] top-[5px] text-[9.3px] leading-[12px] text-white whitespace-pre">H4 Rbci on jurik bands  0.0051 0.0004 0.0105 -0.0097  H1  Rbci slope on jurik with bands  0.0027 0.0027 0.0002 0.0044 -0.0040</div>
            </div>
            <div className="relative flex-1 overflow-hidden">
              {([["0.0115",858],["0",979],["0.00",986],["-0.0107",1103]] as [string, number][]).map(([t, y]) => <PriceTag key={t + y} y={y} text={t} top={850} />)}
            </div>
          </div>
          {/* Time axis */}
          <div className="relative h-[18px] shrink-0 flex pl-[517px] text-[9.5px] leading-[13px] text-white">
            {timeLabels.map(([t, pad], i) => (
              <div key={i} className="w-[64px] shrink-0 flex flex-col items-start whitespace-nowrap">
                <div className="w-px h-[3px] bg-white" />
                <span className={pad}>{t}</span>
              </div>
            ))}
            <div className="absolute left-[545px] top-[3px] w-[80px] h-[12px] bg-[#f00000] text-[#9c0000] text-center leading-[12px]">2011.04.25 04:00</div>
            <div className="absolute left-[637px] top-[3px] w-[80px] h-[12px] bg-[#800080] text-[#560056] text-center leading-[12px]">2011.04.25 15:30</div>
            <div className="absolute left-[1173px] top-[3px] w-[81px] h-[12px] bg-[#800080] text-[#560056] text-center leading-[12px]">2011.04.28 10:30</div>
          </div>
        </div>
        <div className="flex-1 bg-[#a8c6e4]" />
      </div>

      {/* Tabs */}
      <div className="h-[21px] shrink-0 flex bg-[#f0f0f0] pl-[452px] border-b border-[#dcdcdc] text-[11px] text-[#555]">
        {tabs.map(([t, w], i) => (
          <div key={i} className={"flex items-center justify-center " + w + (i < 13 ? " relative after:absolute after:right-0 after:top-[3px] after:h-[14px] after:w-px after:bg-[#888]" : "")}>{t}</div>
        ))}
        <div className="ml-0 w-[87px] bg-white border-x border-b border-black flex items-center justify-center text-[#222]">EURUSD,M30</div>
        <div className="ml-[54px] flex items-center gap-[12px] text-[8px] text-[#333]"><span>◄</span><span className="text-[#aaa]">►</span></div>
      </div>

      {/* Status */}
      <div className="h-[20px] shrink-0 flex items-center bg-[#f0f0f0] pl-[1191px] text-[11px] text-[#333] border-t border-[#e4e4e4]">
        {statusCells.map(([t, w]) => (
          <div key={t} className={"h-[17px] flex items-center pl-[6px] overflow-hidden whitespace-nowrap border-l border-[#aaa] " + w}>{t}</div>
        ))}
        <div className="h-[17px] w-[68px] flex items-center pl-[4px] border-l border-[#aaa]">
          <svg width="24" height="14" viewBox="0 0 24 14">
            {[0,2,4,6,8,10,12,14,16,18,20,22].map((x, i) => <line key={x} x1={x + 0.5} x2={x + 0.5} y1={i % 3 === 0 ? 4 : 1} y2="14" stroke={i % 2 ? "#2060a0" : "#40a040"} />)}
          </svg>
        </div>
        <span>90/4 kb</span>
        <svg className="ml-auto self-end" width="15" height="15" viewBox="0 0 15 15"><path d="M14 2L2 14M14 5L5 14M14 8L8 14M14 11l-3 3" stroke="#999" /></svg>
      </div>

      {/* Taskbar */}
      <div className="h-[30px] shrink-0 relative flex items-center bg-[linear-gradient(#8c8c8c_0%,#3c3c3c_48%,#1e1e1e_52%,#151515_100%)] text-[#e8e8e8]">
        <div className="ml-[62px] flex items-center gap-[5px]">
          <svg width="18" height="18" viewBox="0 0 18 18"><rect x="2" y="2" width="14" height="14" fill="#d8e8f4" stroke="#345" /><rect x="4" y="4" width="5" height="4" fill="#4a88c8" /><rect x="8" y="9" width="6" height="5" fill="#4a88c8" /></svg>
          <svg width="18" height="18" viewBox="0 0 18 18"><rect x="1" y="2" width="16" height="14" fill="#3a78c8" stroke="#aac" /><path d="M3 12h4" stroke="#fff" /></svg>
          <Ie />
          <span className="ml-[12px] text-[12px] font-bold leading-none -translate-y-[5px]">»</span>
        </div>
        <div className="absolute left-[162px] top-[3px] flex gap-[5px]">
          <TaskBtn c="w-[155px] bg-[linear-gradient(#5c5c5c,#2a2a2a_50%,#222)]" text="Elementos eliminad..." icon={<svg className="mx-[6px] shrink-0" width="15" height="18" viewBox="0 0 15 18"><rect x="1" y="1" width="13" height="16" fill="#f4c050" stroke="#c08020" /><circle cx="7.500" cy="9" r="5" fill="#fff4d8" stroke="#d08020" /><path d="M7.500 6v3h3" stroke="#d08020" /></svg>} />
          <TaskBtn c="w-[155px] bg-[linear-gradient(#5c5c5c,#2a2a2a_50%,#222)]" text="Forex-TSD - Reply t..." icon={<span className="mx-[6px] shrink-0 flex"><Ie /></span>} />
          <TaskBtn c="w-[155px] bg-[linear-gradient(#5c5c5c,#2a2a2a_50%,#222)]" text="Glory of Rome on F..." icon={<svg className="mx-[6px] shrink-0" width="17" height="17" viewBox="0 0 17 17"><circle cx="8.500" cy="8.500" r="8" fill="#e8701c" /><circle cx="9.500" cy="8" r="4.500" fill="#3058a8" /><path d="M2 6c2-5 8-6 10-3-3-1-5 0-6 3s1 7 6 7c-4 3-11 0-10-7z" fill="#f0a020" /></svg>} />
          <TaskBtn c="w-[156px] border-[#111] bg-[linear-gradient(#3a3a3a,#1a1a1a)]" text="49318: XTB-Trader - ..." icon={<svg className="ml-[8px] mr-[5px] shrink-0" width="15" height="15" viewBox="0 0 16 16"><circle cx="8" cy="8" r="7.500" fill="#5878a0" /><circle cx="8" cy="8" r="5" fill="#a82c3c" /></svg>} />
          <TaskBtn c="w-[155px] bg-[linear-gradient(#5c5c5c,#2a2a2a_50%,#222)]" text="Rbci on jurik bands ..." icon={<svg className="ml-[10px] mr-[9px] shrink-0" width="10" height="20" viewBox="0 0 10 20"><path d="M0 6l5 14 5-14" stroke="#c03020" strokeWidth="2" fill="none" /><circle cx="5" cy="3" r="3" fill="#f0d040" /></svg>} />
        </div>
        <div className="absolute left-[1732px] top-0 h-full flex items-center text-[11px]">
          <span>ES</span>
          <span className="ml-[18px] font-bold text-[13px]">‹</span>
          <svg className="ml-[11px]" width="16" height="18" viewBox="0 0 16 18"><rect x="0" y="0" width="16" height="18" fill="#f4c050" /><circle cx="8" cy="9" r="5.500" fill="#fff4d8" stroke="#d08020" /><path d="M8 6v3h3" stroke="#d08020" /></svg>
          <svg className="ml-[1px]" width="16" height="16" viewBox="0 0 16 16"><rect x="3" y="1" width="11" height="9" fill="#3868b8" stroke="#ccd" /><path d="M1 14l5-4h9l-3 4z" fill="#c8b060" /></svg>
          <div className="ml-[3px] w-[16px] h-[17px] bg-[linear-gradient(#fff_45%,#f08010_45%)] text-[7px] font-bold leading-[8px] text-[#1030a0]">RTT</div>
          <svg className="ml-[11px]" width="18" height="18" viewBox="0 0 18 18"><rect x="2" y="2" width="9" height="8" fill="#5898d8" stroke="#cde" /><rect x="6" y="7" width="9" height="8" fill="#3878c0" stroke="#cde" /><circle cx="6" cy="13" r="3.500" fill="#30a860" /></svg>
          <svg className="ml-[3px]" width="16" height="14" viewBox="0 0 16 14"><path d="M1 5h3l4-3v10L4 9H1z" fill="#d8e4f0" /><path d="M10 4c1.500 2 1.500 4 0 6M12.500 2.500c2.500 3 2.500 6 0 9" stroke="#8fb8e0" fill="none" /></svg>
          <span className="ml-[6px] text-[12px]">11:49</span>
        </div>
      </div>

      {/* Alert dialog */}
      <div className="absolute left-0 top-[993px] w-[521px] h-[177px] bg-[#cfe0ee] rounded-tr-[6px] flex flex-col pr-[8px] border-r border-t border-[#d8e4ee]">
        <div className="h-[27px] shrink-0 flex items-center text-[12px] text-[#444]">
          <div className="w-[16px] flex justify-start -ml-[5px] mr-[5px]"><Bell s={14} /></div>
          <span className="mt-[3px]">Aviso</span>
          <div className="ml-auto flex gap-[4px] mr-[2px]">
            <div className="w-[27px] h-[14px] border border-[#8a9aaa] rounded-[2px] bg-[#dde8f2] text-center text-[11px] leading-[12px] font-bold text-[#445]">?</div>
            <div className="w-[27px] h-[14px] border border-[#8a9aaa] rounded-[2px] bg-[#dde8f2] text-center text-[10px] leading-[12px] font-bold text-[#556]">✕</div>
          </div>
        </div>
        <div className="flex-1 bg-[#f0f0f0] flex flex-col min-h-0">
          <div className="h-[68px] shrink-0 flex">
            <div className="ml-[8px] mt-[12px]"><Bell s={38} /></div>
            <div className="ml-[19px] mt-[15px] text-[10.7px] leading-[14px] text-[#222] whitespace-nowrap">21:59:59 EURUSD H1 Bearish Butterfly</div>
            <div className="ml-auto mr-[8px] mt-[15px] w-[15px] h-[45px] flex flex-col justify-between items-center py-[6px] bg-[#ececec] text-[7px] leading-none text-[#777]"><span>▲</span><span>▼</span></div>
          </div>
          <div className="ml-[2px] mr-[8px] h-[77px] shrink-0 border border-[#666] flex overflow-hidden bg-white">
            <div className="flex-1 flex flex-col overflow-hidden pt-[1px]">
              {alerts.map(([tm, tx, bg], i) => (
                <div key={i} className={"h-[20px] shrink-0 flex items-center text-[10.7px] text-[#222] whitespace-nowrap border-b border-[#d8d8d8] " + bg}>
                  <div className="w-[119px] flex items-center border-r border-[#ccc] h-full pl-[8px]"><Bell s={13} /><span className="ml-[4px]">{tm}</span></div>
                  <span className="ml-[6px]">{tx}</span>
                </div>
              ))}
            </div>
            <div className="w-[17px] shrink-0 bg-[#f0f0f0] flex flex-col items-center text-[7px] text-[#444]">
              <span className="mt-[8px]">▲</span>
              <div className="mt-[3px] w-[13px] h-[15px] border border-[#999] rounded-[2px] bg-[#e4e4e4]" />
              <span className="mt-[24px]">▼</span>
            </div>
          </div>
        </div>
      </div>

      {/* Start orb */}
      <svg className="absolute left-[8px] top-[1165px]" width="42" height="35" viewBox="0 0 42 42">
        <defs>
          <radialGradient id="orb" cx="50%" cy="35%" r="65%"><stop offset="0" stopColor="#6ab0e0" /><stop offset="1" stopColor="#0c3a70" /></radialGradient>
        </defs>
        <circle cx="21" cy="21" r="20" fill="url(#orb)" stroke="#c8d4dc" strokeWidth="1.500" />
        <path d="M10 15c3-2 6-2 10 0l-1.500 6c-3-1.500-6-1.500-10 0z" fill="#e8502c" />
        <path d="M22 15c3 2 6 2 10 0l-1.500 6c-3 2-6 2-10 0z" fill="#78c040" />
        <path d="M8 23c3-1.500 6-1.500 10 0l-1.500 6c-3-1.500-6-1.500-10 0z" fill="#3c9ee0" />
        <path d="M20 23c3 2 6 2 10 0l-1.500 6c-3 2-6 2-10 0z" fill="#f8c830" />
      </svg>
    </div>
  );
}
